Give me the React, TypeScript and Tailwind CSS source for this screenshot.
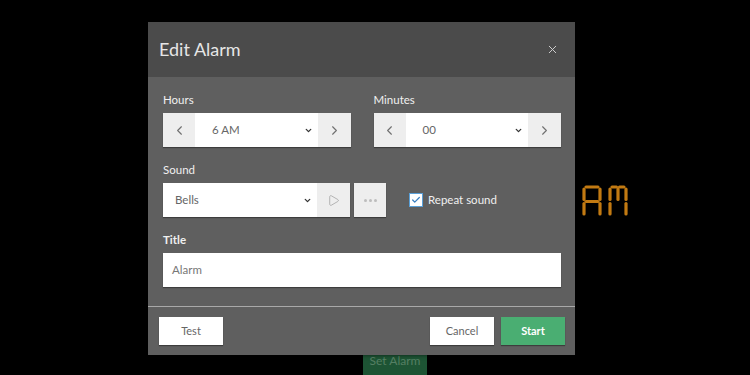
import { X, ChevronLeft, ChevronRight, ChevronDown, Play, Check } from "lucide-react";

// segments: a top, b top-right, c bottom-right, d bottom, e bottom-left, f top-left, g middle
const SEGMENTS: Record<string, string[]> = {
  A: ["a", "b", "c", "e", "f", "g"],
};

function SegmentChar({ on, m }: { on?: string[]; m?: boolean }) {
  const c = "#c27a12";
  const lines: Record<string, [number, number, number, number]> = {
    a: [4, 2, 16, 2],
    b: [18, 4, 18, 14.5],
    c: [18, 18.5, 18, 29],
    d: [4, 31, 16, 31],
    e: [2, 18.5, 2, 29],
    f: [2, 4, 2, 14.5],
    g: [4, 16.5, 16, 16.5],
  };
  const seg = (k: string, x1: number, y1: number, x2: number, y2: number) => (
    <line key={k} x1={x1} y1={y1} x2={x2} y2={y2} stroke={c} strokeWidth="3.2" strokeLinecap="round" />
  );
  return (
    <svg width="20" height="33" viewBox="0 0 20 33">
      {(on ?? []).map((s) => {
        const [x1, y1, x2, y2] = lines[s];
        return seg(s, x1, y1, x2, y2);
      })}
      {m && (
        <>
          {seg("f", 2, 4, 2, 14.5)}
          {seg("e", 2, 18.5, 2, 29)}
          {seg("a1", 4, 2, 8.5, 2)}
          {seg("a2", 11.5, 2, 16, 2)}
          {seg("i", 10, 4, 10, 14.5)}
          {seg("b", 18, 4, 18, 14.5)}
          {seg("c", 18, 18.5, 18, 29)}
        </>
      )}
    </svg>
  );
}

function Stepper({ value }: { value: string }) {
  return (
    <div className="flex h-[34px] shadow-[0_1px_1px_rgba(0,0,0,0.35)]">
      <button className="w-[32px] bg-[#eeeeee] flex items-center justify-center text-[#707070]">
        <ChevronLeft className="w-[15px] h-[15px]" strokeWidth={1.8} />
      </button>
      <div className="flex-1 bg-white flex items-center justify-between pl-[17px] pr-[5px] text-[11.5px] text-[#666]">
        <span>{value}</span>
        <ChevronDown className="w-[9px] h-[9px] text-[#333]" strokeWidth={3.5} />
      </div>
      <button className="w-[33px] bg-[#eeeeee] flex items-center justify-center text-[#707070]">
        <ChevronRight className="w-[15px] h-[15px]" strokeWidth={1.8} />
      </button>
    </div>
  );
}

export default function App() {
  return (
    <div
      className="relative w-[750px] h-[375px] bg-black overflow-hidden"
      style={{ fontFamily: 'Lato, "Open Sans", sans-serif' }}
    >
      {/* Clock behind the dialog */}
      <div className="pl-[582px] pt-[185px] flex gap-[6px]">
        <SegmentChar on={SEGMENTS.A} />
        <SegmentChar m />
      </div>
      <div className="ml-[363px] mt-[128px] w-[64px] h-[30px] bg-[#1d5434] text-[#557f63] text-[12px] flex items-center justify-center">
        Set Alarm
      </div>

      {/* Dialog */}
      <div className="absolute left-[148px] top-[22px] w-[427px] h-[333px] bg-[#5f5f5f] shadow-[0_0_4px_rgba(0,0,0,0.6)] flex flex-col">
        <div className="h-[55px] bg-[#4b4b4b] flex items-center justify-between pl-[11px] pr-[16px]">
          <h1 className="text-[18px] text-[#e6e6e6]">Edit Alarm</h1>
          <X className="w-[13px] h-[13px] text-[#d0d0d0]" strokeWidth={1.8} />
        </div>

        <div className="pt-[15px] pl-[15px] pr-[14px] pb-[19px] flex flex-col gap-[15px] border-b border-[#a9a9a9]">
          <div className="grid grid-cols-2 gap-[23px]">
            <div>
              <label className="block text-[11.5px] leading-[16px] text-[#f0f0f0] mb-[5px]">Hours</label>
              <Stepper value="6 AM" />
            </div>
            <div>
              <label className="block text-[11.5px] leading-[16px] text-[#f0f0f0] mb-[5px]">Minutes</label>
              <Stepper value="00" />
            </div>
          </div>

          <div>
            <label className="block text-[11.5px] leading-[16px] text-[#f0f0f0] mb-[5px]">Sound</label>
            <div className="flex items-center">
              <div className="flex h-[34px] w-[187px] shadow-[0_1px_1px_rgba(0,0,0,0.35)]">
                <div className="flex-1 bg-white flex items-center justify-between pl-[12px] pr-[5px] text-[11.5px] text-[#666]">
                  <span>Bells</span>
                  <ChevronDown className="w-[9px] h-[9px] text-[#333]" strokeWidth={3.5} />
                </div>
                <button className="w-[33px] bg-[#eeeeee] flex items-center justify-center text-[#9a9a9a]">
                  <Play className="w-[13px] h-[13px]" strokeWidth={1.3} />
                </button>
              </div>
              <button className="ml-[4px] w-[32px] h-[34px] bg-[#eeeeee] flex items-center justify-center gap-[2px] shadow-[0_1px_1px_rgba(0,0,0,0.35)]">
                <span className="w-[3px] h-[3px] rounded-full bg-[#bdbdbd]" />
                <span className="w-[3px] h-[3px] rounded-full bg-[#bdbdbd]" />
                <span className="w-[3px] h-[3px] rounded-full bg-[#bdbdbd]" />
              </button>
              <label className="ml-[23px] flex items-center gap-[5px] text-[11.5px] text-[#f0f0f0]">
                <span className="w-[14px] h-[14px] bg-white border border-[#5aa0d8] flex items-center justify-center">
                  <Check className="w-[10px] h-[10px] text-[#3a7fc0]" strokeWidth={3} />
                </span>
                Repeat sound
              </label>
            </div>
          </div>

          <div>
            <label className="block text-[11.5px] leading-[16px] text-[#f0f0f0] font-bold mb-[5px]">Title</label>
            <div className="h-[34px] bg-white flex items-center pl-[9px] text-[11.5px] text-[#777] shadow-[0_1px_1px_rgba(0,0,0,0.35)]">
              Alarm
            </div>
          </div>
        </div>

        <div className="flex items-start justify-between pt-[10px] pl-[11px] pr-[10px]">
          <button className="w-[64px] h-[28px] bg-white text-[11px] text-[#666] shadow-[0_1px_1px_rgba(0,0,0,0.35)]">Test</button>
          <div className="flex gap-[7px]">
            <button className="w-[64px] h-[28px] bg-white text-[11px] text-[#666] shadow-[0_1px_1px_rgba(0,0,0,0.35)]">Cancel</button>
            <button className="w-[64px] h-[28px] bg-[#4aae72] text-[11px] text-white font-bold shadow-[0_1px_1px_rgba(0,0,0,0.35)]">Start</button>
          </div>
        </div>
      </div>
    </div>
  );
}
